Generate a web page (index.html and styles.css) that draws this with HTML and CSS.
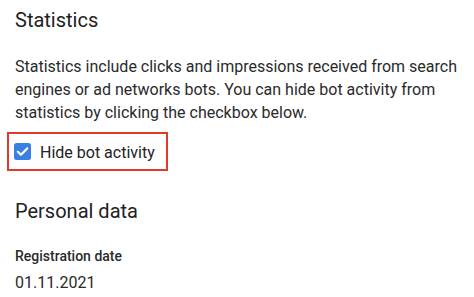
FILE: index.html
```html
<!DOCTYPE html>
<html lang="en">
<head>
<meta charset="utf-8">
<link rel="stylesheet" href="styles.css">
</head>
<body>
<main class="page">
  <section class="section">
    <h2 class="title">Statistics</h2>
    <p class="text">Statistics include clicks and impressions received from search engines or ad networks bots. You can hide bot activity from statistics by clicking the checkbox below.</p>
    <label class="check-frame">
      <span class="check-box">
        <svg width="17" height="17" viewBox="0 0 17 17"><rect x="0" y="0" width="17" height="17" rx="2.5" fill="#3b7fe4"/><path d="M3.8 8.8 L7 11.8 L13.2 5.4" fill="none" stroke="#fff" stroke-width="2.2" stroke-linecap="round" stroke-linejoin="round"/></svg>
      </span>
      <span class="check-label">Hide bot activity</span>
    </label>
  </section>
  <section class="section personal">
    <h2 class="title">Personal data</h2>
    <div class="field-label">Registration date</div>
    <div class="field-value">01.11.2021</div>
  </section>
</main>
</body>
</html>
```
FILE: styles.css
```css
html, body {
  margin: 0;
  padding: 0;
  background: #ffffff;
}
body {
  font-family: Roboto, "Noto Sans", sans-serif;
  color: #222222;
}
.page {
  padding: 8px 15px 0 15px;
}
.title {
  margin: 0;
  font-size: 20px;
  font-weight: 400;
  line-height: 24px;
  color: #222222;
}
.text {
  margin: 23px 0 0 0;
  font-size: 16px;
  line-height: 23px;
  color: #2a2a2a;
}
.check-frame {
  display: inline-flex;
  align-items: center;
  margin: 8px 0 0 -8px;
  padding: 0 11px 0 5px;
  height: 35px;
  border: 2px solid #de3b2a;
  gap: 9px;
}
.check-box {
  display: flex;
  width: 17px;
  height: 17px;
}
.check-label {
  font-size: 16px;
  line-height: 20px;
  padding-top: 2px;
  color: #222222;
}
.personal {
  margin-top: 28px;
}
.field-label {
  margin-top: 23px;
  font-size: 14px;
  font-weight: 500;
  line-height: 20px;
  color: #2a2a2a;
}
.field-value {
  margin-top: 5px;
  font-size: 16px;
  line-height: 24px;
  color: #2a2a2a;
}
```
